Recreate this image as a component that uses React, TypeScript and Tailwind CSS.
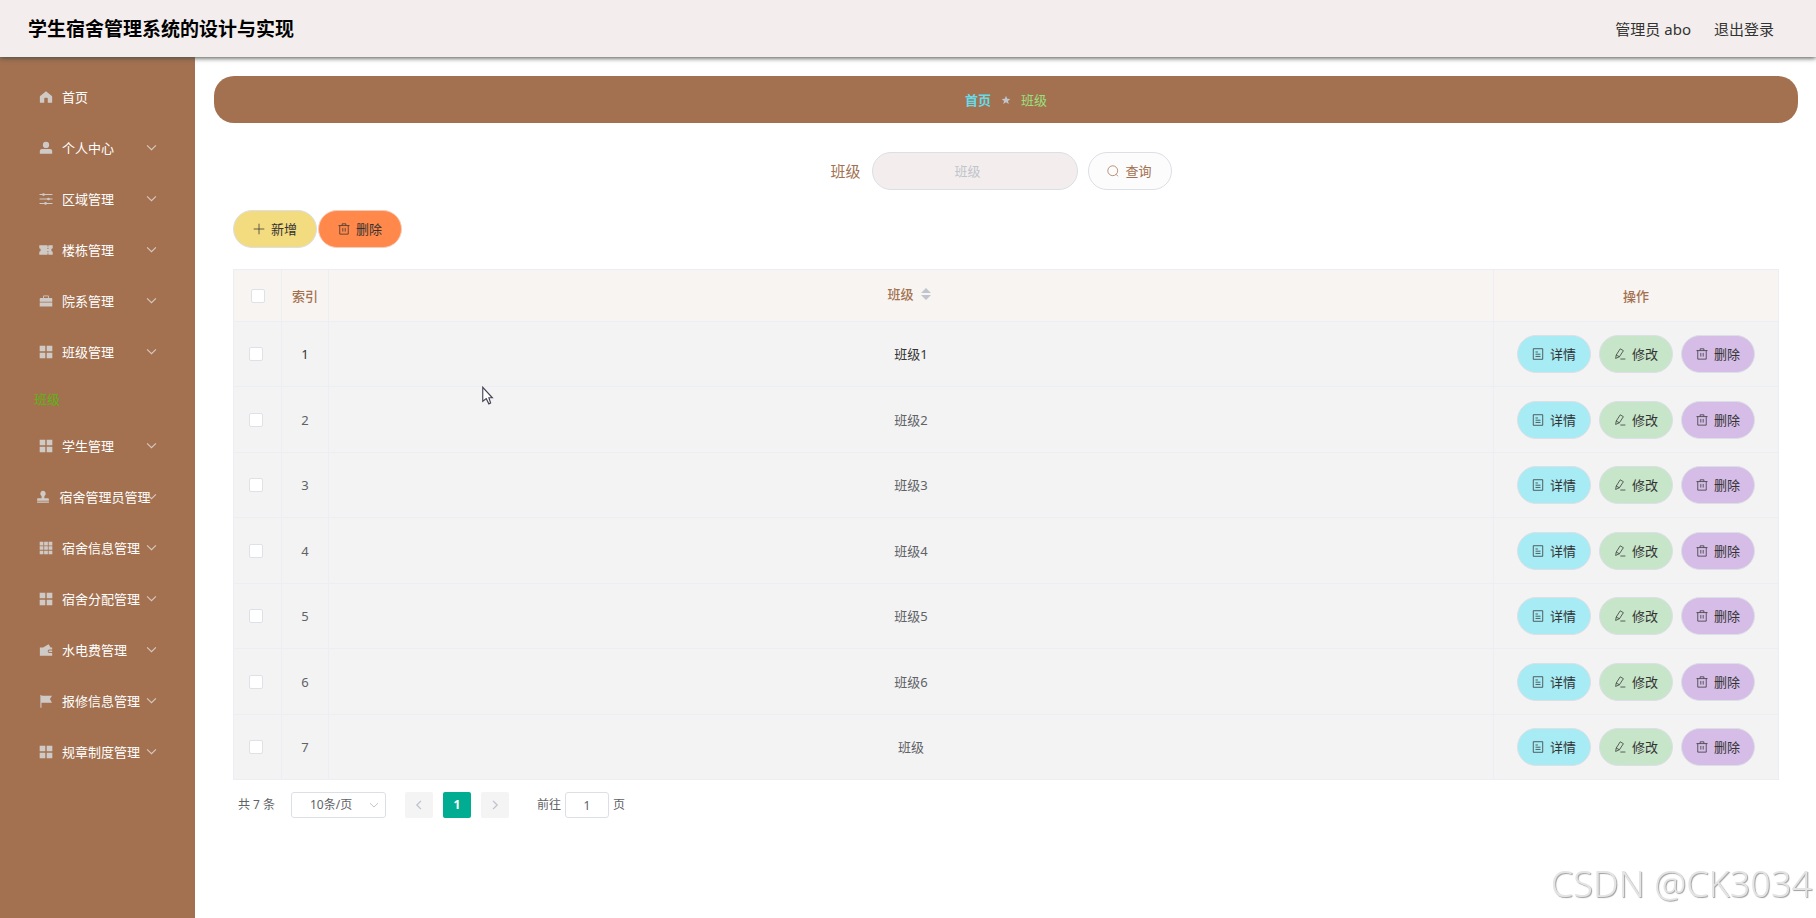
import type { ReactNode } from "react";

function Svg({ className, children }: { className?: string; children: ReactNode }) {
  return (
    <svg viewBox="0 0 1024 1024" fill="currentColor" aria-hidden="true" className={className}>
      {children}
    </svg>
  );
}

const stroke = { fill: "none", stroke: "currentColor", strokeWidth: 64 } as const;

const glyphs: Record<string, ReactNode> = {
  home: <path d="M512 96 L64 460 V928 H384 V620 Q384 560 444 560 H580 Q640 560 640 620 V928 H960 V460 Z" />,
  user: (
    <>
      <circle cx="512" cy="290" r="230" />
      <path d="M220 580 H804 Q964 590 964 740 V930 H60 V740 Q60 590 220 580 Z" />
    </>
  ),
  sliders: (
    <>
      <path d="M40 190 H984 M40 512 H984 M40 834 H984" {...stroke} strokeWidth={75} />
      <circle cx="330" cy="190" r="100" />
      <circle cx="690" cy="512" r="100" />
      <circle cx="480" cy="834" r="100" />
    </>
  ),
  ticket: <path d="M20 160 H620 V250 H690 V160 H1004 V380 A135 135 0 0 0 1004 644 V864 H690 V774 H620 V864 H20 V644 A135 135 0 0 0 20 380 Z M620 340 V430 H690 V340 Z M620 594 V684 H690 V594 Z" fillRule="evenodd" />,
  briefcase: (
    <>
      <path d="M330 320 V140 H694 V320" {...stroke} />
      <path d="M100 300 H924 Q970 300 970 340 V560 H54 V340 Q54 300 100 300 Z M54 630 H970 V920 H54 Z" />
    </>
  ),
  menu: <path d="M50 50 H460 V460 H50 Z M564 50 H974 V460 H564 Z M50 564 H460 V974 H50 Z M564 564 H974 V974 H564 Z" />,
  stamp: (
    <path d="M512 64 A200 200 0 0 1 640 418 Q600 470 610 600 H880 Q944 610 944 680 V780 H80 V680 Q80 610 144 600 H414 Q424 470 384 418 A200 200 0 0 1 512 64 Z M80 850 H944 V930 H80 Z" />
  ),
  grid: (
    <path d="M50 50 H320 V320 H50 Z M377 50 H647 V320 H377 Z M704 50 H974 V320 H704 Z M50 377 H320 V647 H50 Z M377 377 H647 V647 H377 Z M704 377 H974 V647 H704 Z M50 704 H320 V974 H50 Z M377 704 H647 V974 H377 Z M704 704 H974 V974 H704 Z" />
  ),
  wallet: (
    <path d="M64 330 H300 L700 90 L850 330 H964 V480 H760 A125 125 0 0 0 760 730 H964 V940 H64 Z M760 545 H964 V665 H760 A60 60 0 0 1 760 545 Z" />
  ),
  flag: <path d="M100 64 H180 V120 H950 L800 370 L950 640 H180 V1000 H100 Z" />,
  chevronDown: <path d="M100 320 L512 720 L924 320" {...stroke} strokeWidth={100} />,
  chevronLeft: <path d="M680 160 L330 512 L680 864" {...stroke} strokeWidth={120} />,
  chevronRight: <path d="M344 160 L694 512 L344 864" {...stroke} strokeWidth={120} />,
  star: <path d="M512 80 L640 380 L960 405 L715 610 L795 930 L512 755 L229 930 L309 610 L64 405 L384 380 Z" />,
  search: (
    <>
      <circle cx="490" cy="490" r="420" {...stroke} />
      <path d="M770 790 L940 960" {...stroke} />
    </>
  ),
  plus: <path d="M512 60 V964 M60 512 H964" {...stroke} />,
  trash: <path d="M40 220 H984 M352 210 V70 H672 V210 M150 220 V950 H874 V220 M410 420 V730 M614 420 V730" {...stroke} />,
  doc: <path d="M110 60 H914 V964 H110 Z M300 340 H500 M300 530 H724 M300 720 H724" {...stroke} />,
  edit: <path d="M140 890 L190 600 L530 70 L800 230 L460 750 L140 890 Z M190 600 L460 750 M540 940 H970" {...stroke} />,
};

function Icon({ name, className }: { name: string; className?: string }) {
  return <Svg className={className}>{glyphs[name]}</Svg>;
}

type MenuEntry = { icon: string; label: string; children?: string[]; leaf?: boolean };

const menu: MenuEntry[] = [
  { icon: "home", label: "首页", leaf: true },
  { icon: "user", label: "个人中心" },
  { icon: "sliders", label: "区域管理" },
  { icon: "ticket", label: "楼栋管理" },
  { icon: "briefcase", label: "院系管理" },
  { icon: "menu", label: "班级管理", children: ["班级"] },
  { icon: "menu", label: "学生管理" },
  { icon: "stamp", label: "宿舍管理员管理" },
  { icon: "grid", label: "宿舍信息管理" },
  { icon: "menu", label: "宿舍分配管理" },
  { icon: "wallet", label: "水电费管理" },
  { icon: "flag", label: "报修信息管理" },
  { icon: "menu", label: "规章制度管理" },
];

const rows = ["班级1", "班级2", "班级3", "班级4", "班级5", "班级6", "班级"];

const actions = [
  { icon: "doc", label: "详情", color: "bg-[#a7ebf4]" },
  { icon: "edit", label: "修改", color: "bg-[#c7e5c9]" },
  { icon: "trash", label: "删除", color: "bg-[#d5bde7]" },
];

function Sidebar() {
  return (
    <nav className="w-[195px] shrink-0 bg-[#a37150] pt-[14px] text-[13px] text-white">
      <ul>
        {menu.map((item) => (
          <li key={item.label}>
            <button type="button" className="relative flex h-[51px] w-full items-center justify-center gap-[9px] pr-2">
              <Icon name={item.icon} className="size-[14px] shrink-0 text-[#cfcac6]" />
              <span className="min-w-[86px] text-left whitespace-nowrap">{item.label}</span>
              {!item.leaf && (
                <Icon name="chevronDown" className="absolute top-5 right-[38px] size-[11px] text-[#d8cac0]" />
              )}
            </button>
            {item.children?.map((child) => (
              <a key={child} href="#" className="flex h-[43px] items-center pl-[34px] text-[#5fb314]">
                {child}
              </a>
            ))}
          </li>
        ))}
      </ul>
    </nav>
  );
}

function Checkbox({ label }: { label: string }) {
  return (
    <input
      type="checkbox"
      aria-label={label}
      className="block size-[14px] appearance-none rounded-[2px] border border-[#dfe1e8] bg-white checked:bg-[#00ad93]"
    />
  );
}

function ClassTable() {
  const cell = "border border-[#ebeef5] p-0";
  return (
    <table className="mt-[21px] w-full table-fixed border-collapse text-[13px]">
      <colgroup>
        <col className="w-[48px]" />
        <col className="w-[47px]" />
        <col />
        <col className="w-[285px]" />
      </colgroup>
      <thead className="bg-[#f8f4f1] text-[#a37150]">
        <tr className="h-[52px]">
          <th className={cell}>
            <div className="flex justify-center">
              <Checkbox label="全选" />
            </div>
          </th>
          <th className={`${cell} font-medium`}>索引</th>
          <th className={`${cell} font-medium`}>
            <button type="button" className="inline-flex items-center gap-[7px] pr-1 pb-1 align-middle">
              班级
              <svg viewBox="0 0 10 12" aria-hidden="true" className="h-3 w-[10px] fill-[#c0c4cc]">
                <path d="M5 0 L10 5 H0 Z M0 7 H10 L5 12 Z" />
              </svg>
            </button>
          </th>
          <th className={`${cell} font-medium`}>操作</th>
        </tr>
      </thead>
      <tbody className="bg-[#f3f3f3] text-center text-[#606266]">
        {rows.map((name, i) => (
          <tr key={name} className="h-[65px] first:text-[#333333] even:h-[66px]">
            <td className={cell}>
              <div className="flex pl-[15px]">
                <Checkbox label={`选择${name}`} />
              </div>
            </td>
            <td className={cell}>{i + 1}</td>
            <td className={cell}>{name}</td>
            <td className={cell}>
              <div className="flex justify-center gap-2">
                {actions.map((a) => (
                  <button
                    key={a.label}
                    type="button"
                    className={`flex h-[38px] w-[74px] items-center justify-center gap-[6px] rounded-full border border-[#dcdfe6] text-[#333333] ${a.color}`}
                  >
                    <Icon name={a.icon} className="size-3" />
                    {a.label}
                  </button>
                ))}
              </div>
            </td>
          </tr>
        ))}
      </tbody>
    </table>
  );
}

function Pagination() {
  const arrow = "flex h-[26px] w-7 items-center justify-center rounded-[2px] bg-[#f4f4f5] text-[#c0c4cc]";
  return (
    <div className="mt-3 flex items-center pl-[5px] text-[12px] text-[#606266]">
      <span className="w-[53px]">共 7 条</span>
      <div className="relative">
        <select
          aria-label="每页条数"
          className="h-[26px] w-[95px] appearance-none rounded-[3px] border border-[#dcdfe6] bg-white pl-[18px]"
        >
          <option>10条/页</option>
        </select>
        <Icon name="chevronDown" className="pointer-events-none absolute top-2 right-[7px] size-[10px] text-[#c0c4cc]" />
      </div>
      <div className="ml-[19px] flex gap-[10px]">
        <button type="button" aria-label="上一页" className={arrow}>
          <Icon name="chevronLeft" className="size-3" />
        </button>
        <button type="button" className="h-[26px] w-7 rounded-[2px] bg-[#00ad93] font-bold text-white">
          1
        </button>
        <button type="button" aria-label="下一页" className={arrow}>
          <Icon name="chevronRight" className="size-3" />
        </button>
      </div>
      <label className="ml-7 flex items-center gap-1">
        前往
        <input
          type="text"
          defaultValue="1"
          className="h-[26px] w-11 rounded-[3px] border border-[#dcdfe6] bg-white text-center"
        />
        页
      </label>
    </div>
  );
}

export default function App() {
  return (
    <div className="flex min-h-screen flex-col bg-white font-['Noto_Sans','Noto_Sans_CJK_SC',sans-serif] leading-5">
      <header className="z-10 flex h-[57px] items-center justify-between bg-[#f3eeed] pr-[42px] pl-7 shadow-[0_1px_5px_#444c44]">
        <h1 className="text-[19px] font-bold text-black">学生宿舍管理系统的设计与实现</h1>
        <div className="flex gap-[23px] text-[15px] text-[#333333]">
          <span>管理员 abo</span>
          <button type="button">退出登录</button>
        </div>
      </header>
      <div className="flex flex-1">
        <Sidebar />
        <main className="min-w-0 flex-1 pt-[19px] pr-[18px] pl-[19px]">
          <nav className="flex h-[47px] items-center justify-center gap-[10px] rounded-[20px] bg-[#a37150] text-[13px]">
            <a href="#" className="font-bold text-[#66dbe8]">
              首页
            </a>
            <Icon name="star" className="size-[10px] text-[#c0c4cc]" />
            <span className="text-[#99e07c]">班级</span>
          </nav>
          <section className="px-[19px] pt-[29px]">
            <form className="flex items-center justify-center pr-[10px]" onSubmit={(e) => e.preventDefault()}>
              <label htmlFor="class-name" className="text-[15px] text-[#a37150]">
                班级
              </label>
              <input
                id="class-name"
                placeholder="班级"
                className="ml-[11px] h-[38px] w-[206px] rounded-full border border-[#dcdfe6] bg-[#f3eeed] pr-[30px] pl-4 text-center text-[13px] placeholder:text-[#c0c4cc]"
              />
              <button
                type="submit"
                className="ml-[10px] flex h-[38px] w-[84px] items-center justify-center gap-[6px] rounded-full border border-[#dcdfe6] bg-[#fcfcfc] text-[13px] text-[#a37150]"
              >
                <Icon name="search" className="size-3" />
                查询
              </button>
            </form>
            <div className="mt-5 flex gap-[1px] text-[13px] text-[#333333]">
              <button
                type="button"
                className="flex h-[38px] w-[84px] items-center justify-center gap-[6px] rounded-full border border-[#dcdfe6] bg-[#f3dc7f]"
              >
                <Icon name="plus" className="size-3" />
                新增
              </button>
              <button
                type="button"
                className="flex h-[38px] w-[84px] items-center justify-center gap-[6px] rounded-full border border-[#f3cdb9] bg-[#ff884a]"
              >
                <Icon name="trash" className="size-3" />
                删除
              </button>
            </div>
            <ClassTable />
            <Pagination />
          </section>
        </main>
      </div>
      <svg
        viewBox="0 0 16 22"
        aria-hidden="true"
        className="pointer-events-none absolute top-[386px] left-[481px] h-[20px] w-[14px] fill-white stroke-[#444455]"
      >
        <path d="M2 1 V17 L6 14 L9 20 L11 19 L9 13 H13 Z" strokeWidth="1.3" />
      </svg>
      <div className="pointer-events-none fixed right-1 bottom-[14px] font-['Noto_Sans',sans-serif] text-[36px] leading-10 font-light text-[#e4e4e4] [text-shadow:1px_1px_1px_#a0a0a0]">
        CSDN @CK3034
      </div>
    </div>
  );
}
